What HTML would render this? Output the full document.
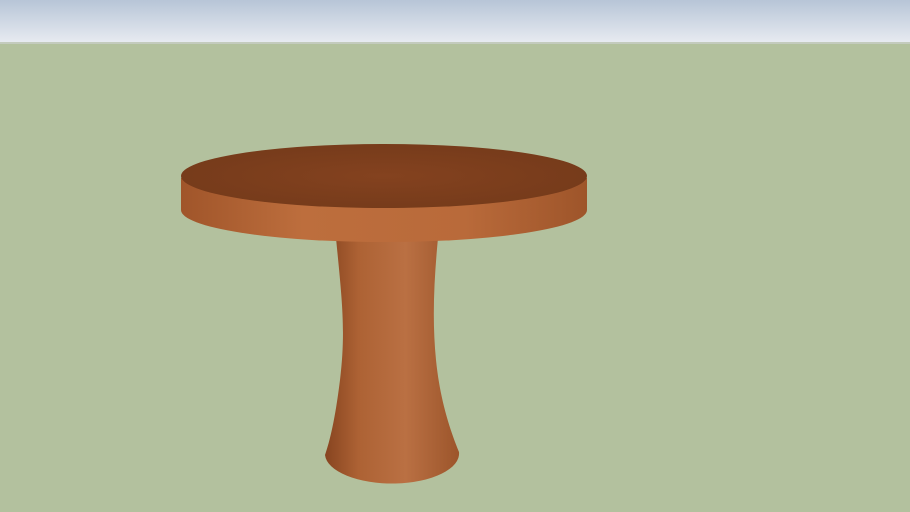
<!DOCTYPE html>
<html><head><style>
html,body{margin:0;padding:0;width:910px;height:512px;overflow:hidden}
</style></head><body>
<svg width="910" height="512" viewBox="0 0 910 512" xmlns="http://www.w3.org/2000/svg">
<defs>
<linearGradient id="sky" x1="0" y1="0" x2="0" y2="1">
<stop offset="0" stop-color="#b7c5d7"/><stop offset="1" stop-color="#e8ebf1"/>
</linearGradient>
<linearGradient id="side" x1="0" y1="0" x2="1" y2="0">
<stop offset="0" stop-color="#a0552a"/><stop offset="0.3" stop-color="#bd6e3d"/>
<stop offset="0.7" stop-color="#b96a3a"/><stop offset="1" stop-color="#9e552a"/>
</linearGradient>
<linearGradient id="ped" x1="0" y1="0" x2="1" y2="0">
<stop offset="0" stop-color="#874420"/><stop offset="0.25" stop-color="#ad6234"/>
<stop offset="0.6" stop-color="#ba7043"/><stop offset="1" stop-color="#9c552b"/>
</linearGradient>
<radialGradient id="top" cx="0.5" cy="0.5" r="0.6">
<stop offset="0" stop-color="#84421f"/><stop offset="1" stop-color="#743a1a"/>
</radialGradient>
</defs>
<rect width="910" height="43" fill="url(#sky)"/>
<rect y="42" width="910" height="2" fill="#c3cbbd"/>
<rect y="44" width="910" height="468" fill="#b3c19e"/>
<path d="M336 238 C342 300,346 330,340 380 C335 420,330 440,325 455 A67 30 0 0 0 459 452 C450 430,440 400,436 360 C432 320,434 280,438 238 Z" fill="url(#ped)"/>
<path d="M181 178 L181 210 A203 32 0 0 0 587 210 L587 178 Z" fill="url(#side)"/>
<ellipse cx="384" cy="176" rx="203" ry="32" fill="url(#top)"/>
</svg>
</body></html>
